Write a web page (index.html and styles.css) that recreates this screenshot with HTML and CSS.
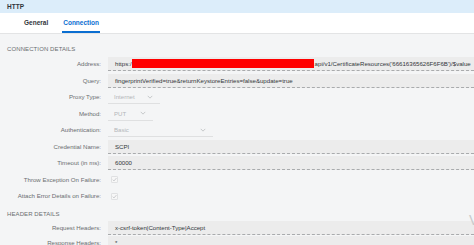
FILE: index.html
```html
<!DOCTYPE html>
<html>
<head>
<meta charset="utf-8">
<link rel="stylesheet" href="styles.css">
</head>
<body>
<div class="page">
  <div class="titlebar">HTTP</div>
  <div class="tabs">
    <div class="tab">General</div>
    <div class="tab active">Connection</div>
  </div>
  <div class="content">
    <div class="section-title">CONNECTION DETAILS</div>
    <div class="form">
      <div class="label">Address:</div>
      <div class="input"><span>https:/</span><span class="redact"></span><span>api/v1/CertificateResources('66616365626F6F6B')/$value</span></div>

      <div class="label">Query:</div>
      <div class="input">fingerprintVerified=true&amp;returnKeystoreEntries=false&amp;update=true</div>

      <div class="label">Proxy Type:</div>
      <div class="select w52"><span>Internet</span><svg class="chev" viewBox="0 0 8 5"><path d="M1 1l3 3 3-3" fill="none" stroke="#b0b3b6" stroke-width="0.9"/></svg></div>

      <div class="label">Method:</div>
      <div class="select w45"><span>PUT</span><svg class="chev" viewBox="0 0 8 5"><path d="M1 1l3 3 3-3" fill="none" stroke="#b0b3b6" stroke-width="0.9"/></svg></div>

      <div class="label">Authentication:</div>
      <div class="select w105"><span>Basic</span><svg class="chev" viewBox="0 0 8 5"><path d="M1 1l3 3 3-3" fill="none" stroke="#b0b3b6" stroke-width="0.9"/></svg></div>

      <div class="label">Credential Name:</div>
      <div class="input">SCPI</div>

      <div class="label">Timeout (in ms):</div>
      <div class="input">60000</div>

      <div class="label">Throw Exception On Failure:</div>
      <div class="check"><svg viewBox="0 0 8 8"><rect x="0.5" y="0.5" width="7" height="7" rx="1" fill="#f7f7f7" stroke="#c9cbcd" stroke-width="0.6"/><path d="M2 4.2l1.4 1.4L6.2 2.4" fill="none" stroke="#b5b8bb" stroke-width="0.8"/></svg></div>

      <div class="label">Attach Error Details on Failure:</div>
      <div class="check"><svg viewBox="0 0 8 8"><rect x="0.5" y="0.5" width="7" height="7" rx="1" fill="#f7f7f7" stroke="#c9cbcd" stroke-width="0.6"/><path d="M2 4.2l1.4 1.4L6.2 2.4" fill="none" stroke="#b5b8bb" stroke-width="0.8"/></svg></div>
    </div>
    <div class="section-title second">HEADER DETAILS</div>
    <div class="form tight">
      <div class="label">Request Headers:</div>
      <div class="input">x-csrf-token|Content-Type|Accept</div>

      <div class="label">Response Headers:</div>
      <div class="input">*</div>
    </div>
  </div>
  <div class="watermark">V</div>
</div>
</body>
</html>
```

FILE: styles.css
```css
* { box-sizing: border-box; }
html, body { margin: 0; padding: 0; }
body {
  width: 474px;
  height: 245px;
  overflow: hidden;
  background: #f4f5f6;
  font-family: "Liberation Sans", Arial, sans-serif;
  font-size: 6.1px;
  color: #32363a;
}
.page { width: 474px; position: relative; }
.titlebar {
  height: 13px;
  background: #dcedfa;
  font-weight: bold;
  font-size: 6.5px;
  line-height: 13px;
  padding-left: 7px;
  color: #32363a;
}
.tabs {
  height: 21px;
  background: #ffffff;
  border-bottom: 1px solid #e3e4e5;
  display: flex;
  padding-left: 24px;
  gap: 14px;
}
.tab {
  font-size: 6.5px;
  font-weight: bold;
  line-height: 19px;
  color: #32363a;
  border-bottom: 2px solid transparent;
  height: 20px;
}
.tab.active {
  color: #0a6ed1;
  border-bottom-color: #0a6ed1;
  padding: 0 1px;
}
.content { padding-top: 11px; }
.section-title {
  padding-left: 7px;
  font-size: 6px;
  color: #6a6d70;
  line-height: 8px;
  height: 8px;
  letter-spacing: 0.1px;
}
.section-title.second { margin-top: 7px; }
.form {
  display: grid;
  grid-template-columns: 101px 1fr;
  column-gap: 7px;
  row-gap: 2.5px;
  margin-top: 4px;
  align-items: center;
}
.form.tight { row-gap: 1px; margin-top: 3px; }
.label {
  text-align: right;
  color: #6a6d70;
  height: 14px;
  line-height: 14px;
  white-space: nowrap;
}
.input {
  height: 14px;
  line-height: 13px;
  background: #ececec;
  border-bottom: 1px dashed #a9abad;
  padding-left: 7px;
  white-space: nowrap;
  overflow: hidden;
  display: flex;
  align-items: center;
  color: #32363a;
}
.redact {
  display: inline-block;
  width: 182px;
  height: 9px;
  background: #ff0000;
  margin: 0 1px 0 0;
}
.select {
  height: 14px;
  border-bottom: 1px solid #dfe0e1;
  display: flex;
  align-items: center;
  justify-content: space-between;
  padding-left: 6px;
  padding-right: 7px;
  color: #b3b6b9;
}
.w52 { width: 52px; }
.w45 { width: 45px; }
.w105 { width: 105px; }
.chev { width: 6px; height: 4px; }
.check {
  height: 14px;
  display: flex;
  align-items: center;
  padding-left: 3px;
}
.check svg { width: 7px; height: 7px; }
.watermark {
  position: absolute;
  left: 469px;
  top: 212px;
  font-size: 14px;
  color: #c8cacc;
  font-family: "Liberation Sans", Arial, sans-serif;
  line-height: 16px;
}
```
